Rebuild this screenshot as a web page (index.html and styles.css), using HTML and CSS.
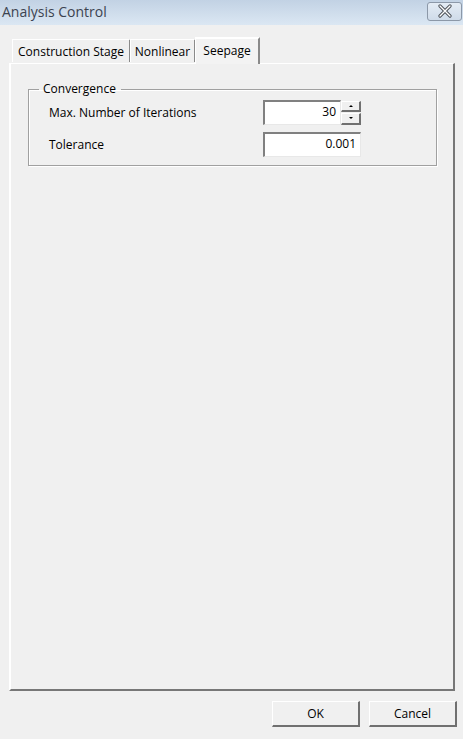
FILE: index.html
```html
<!DOCTYPE html>
<html>
<head>
<meta charset="utf-8">
<link rel="stylesheet" href="styles.css">
</head>
<body>
<div class="window">
  <div class="titlebar">
    <span class="title">Analysis Control</span>
    <div class="close">
      <svg width="16" height="14" viewBox="0 0 16 14">
        <path d="M3 2 L13 12 M13 2 L3 12" stroke="#4a4f57" stroke-width="3.2" stroke-linecap="round"/>
        <path d="M3 2 L13 12 M13 2 L3 12" stroke="#ffffff" stroke-width="1.4" stroke-linecap="round"/>
      </svg>
    </div>
  </div>
  <div class="content">
    <div class="tabs">
      <div class="tab t1">Construction Stage</div>
      <div class="tab t2">Nonlinear</div>
      <div class="tab t3 active">Seepage</div>
    </div>
    <div class="panel">
      <fieldset class="group">
        <legend>Convergence</legend>
        <div class="row">
          <span class="label">Max. Number of Iterations</span>
          <div class="spinfield">
            <div class="input spin">30</div>
            <div class="spinner">
              <div class="sbtn"><span class="up"></span></div>
              <div class="sbtn"><span class="down"></span></div>
            </div>
          </div>
        </div>
        <div class="row">
          <span class="label">Tolerance</span>
          <div class="input wide">0.001</div>
        </div>
      </fieldset>
    </div>
    <div class="footer">
      <button class="btn">OK</button>
      <button class="btn">Cancel</button>
    </div>
  </div>
</div>
</body>
</html>
```
FILE: styles.css
```css
html, body {
  margin: 0;
  padding: 0;
  background: #f0f0f0;
}
.window {
  width: 463px;
  height: 739px;
  font-family: "Open Sans", "Liberation Sans", Arial, sans-serif;
  font-size: 12px;
  color: #000;
  display: flex;
  flex-direction: column;
}
.titlebar {
  height: 25px;
  background: linear-gradient(#c2d2e4, #dbe7f3);
  display: flex;
  align-items: center;
  justify-content: space-between;
  padding: 0 1px 0 2px;
  box-sizing: border-box;
}
.title {
  font-family: "Open Sans", "Liberation Sans", sans-serif;
  font-size: 14px;
  color: #3c4350;
  margin-top: -2px;
}
.close {
  width: 35px;
  height: 19px;
  margin-top: -3px;
  border: 1px solid #8c98a8;
  border-radius: 3px;
  background: linear-gradient(#e4ecf5, #cfdbe9);
  display: flex;
  align-items: center;
  justify-content: center;
  box-sizing: border-box;
}
.content {
  flex: 1;
  display: flex;
  flex-direction: column;
  padding: 12px 8px 0 9px;
}
.tabs {
  display: flex;
  align-items: flex-end;
  padding-left: 3px;
  height: 26px;
  position: relative;
  z-index: 1;
}
.tab {
  height: 23px;
  box-sizing: border-box;
  padding: 3px 0 0 0;
  text-align: center;
  border-top: 1px solid #fff;
  border-left: 1px solid #fff;
  border-right: 2px solid #8a8a8a;
  background: #f0f0f0;
  margin-bottom: 1px;
  white-space: nowrap;
}
.t1 { width: 119px; }
.t2 { width: 66px; margin-left: -1px; }
.tab.active {
  width: 65px;
  height: 27px;
  margin-bottom: -1px;
  padding: 3px 0 0 0;
  margin-left: -1px;
  background: #f3f3f3;
  border-top: 2px solid #fff;
  border-left: 1px solid #fff;
  border-right: 2px solid #8a8a8a;
}
.panel {
  height: 628px;
  box-sizing: border-box;
  border-top: 1px solid #fff;
  border-left: 2px solid #fff;
  border-right: 2px solid #777;
  border-bottom: 2px solid #777;
  padding: 18px 16px 0 17px;
}
.group {
  margin: 0;
  box-sizing: border-box;
  border: 1px solid #a0a0a0;
  box-shadow: 1px 1px 0 #fff, inset 1px 1px 0 #fff;
  padding: 0 0 5px 20px;
}
.group legend {
  padding: 0 5px 0 4px;
  margin-left: -10px;
  line-height: 14px;
}
.row {
  display: flex;
  align-items: center;
  justify-content: space-between;
  padding-right: 75px;
  height: 32px;
}
.spinfield {
  display: flex;
}
.input {
  height: 25px;
  box-sizing: border-box;
  background: #fff;
  border-top: 2px solid #808080;
  border-left: 2px solid #808080;
  border-right: 1px solid #e8e8e8;
  border-bottom: 1px solid #e8e8e8;
  text-align: right;
  padding: 1px 4px 0 0;
  font-size: 12px;
}
.input.spin {
  width: 78px;
}
.input.wide {
  width: 98px;
}
.spinner {
  width: 20px;
  height: 25px;
  display: flex;
  flex-direction: column;
  gap: 1px;
  padding-top: 1px;
  box-sizing: border-box;
}
.sbtn {
  flex: 1;
  box-sizing: border-box;
  background: #f0f0f0;
  border-top: 1px solid #fff;
  border-left: 1px solid #fff;
  border-right: 2px solid #707070;
  border-bottom: 2px solid #707070;
  display: flex;
  align-items: center;
  justify-content: center;
}
.up {
  width: 0;
  height: 0;
  border-left: 2px solid transparent;
  border-right: 2px solid transparent;
  border-bottom: 2px solid #000;
}
.down {
  width: 0;
  height: 0;
  border-left: 2px solid transparent;
  border-right: 2px solid transparent;
  border-top: 2px solid #000;
}
.footer {
  display: flex;
  justify-content: flex-end;
  gap: 9px;
  padding-top: 10px;
  margin-right: -2px;
}
.btn {
  width: 88px;
  height: 26px;
  font-family: "Open Sans", "Liberation Sans", Arial, sans-serif;
  font-size: 12px;
  color: #000;
  background: #f0f0f0;
  border-top: 1px solid #fff;
  border-left: 1px solid #fff;
  border-right: 2px solid #707070;
  border-bottom: 2px solid #707070;
  padding: 0;
  margin: 0;
}
```
